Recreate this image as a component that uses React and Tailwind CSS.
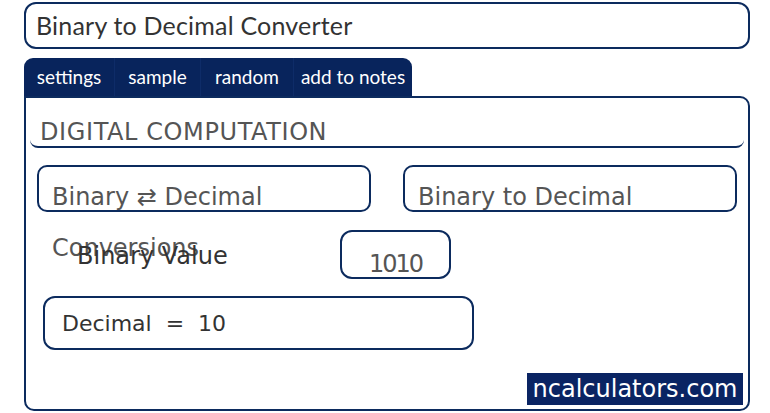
import React from "react"

const navy = "border-[#0c2b5e]"

export default function App() {
  return (
    <div className="w-[770px] h-[413px] bg-white px-[24px] pr-[20px] pt-[2px] font-['DejaVu_Sans',sans-serif] text-[#333]">
      {/* Title */}
      <div className={`h-[47px] border-2 ${navy} rounded-[12px] flex items-center pl-[10px] text-[25px] font-['Lato',sans-serif] tracking-[0.2px]`}>
        Binary to Decimal Converter
      </div>

      {/* Tabs */}
      <div className="mt-[9px] h-[38px] w-[388px] bg-[#08245c] rounded-t-[9px] flex items-stretch text-white text-[19px] font-['Lato',sans-serif]">
        <span className="w-[91px] flex items-center justify-center border-r border-[#0e2c68]">settings</span>
        <span className="w-[86px] flex items-center justify-center border-r border-[#0e2c68]">sample</span>
        <span className="w-[93px] flex items-center justify-center border-r border-[#0e2c68]">random</span>
        <span className="flex-1 flex items-center justify-center">add to notes</span>
      </div>

      {/* Panel */}
      <div className={`h-[315px] border-2 ${navy} rounded-tr-[10px] rounded-b-[10px] flex flex-col`}>
        <div className={`mx-[4px] h-[50px] border-b-2 ${navy} rounded-b-[8px] flex items-end pb-[2px] pl-[10px] text-[24px] leading-[24px] text-[#555] tracking-[0.6px]`}>
          DIGITAL COMPUTATION
        </div>

        <div className="mt-[17px] pl-[11px] flex gap-[32px] text-[24px]">
          <div className={`w-[334px] h-[47px] border-2 ${navy} rounded-[10px] pl-[13px] pt-[5px] text-[#555] leading-[51px] whitespace-nowrap`}>
            Binary ⇄ Decimal
            <br />
            Conversions
          </div>
          <div className={`w-[334px] h-[47px] border-2 ${navy} rounded-[10px] pl-[13px] pt-[5px] text-[#555] leading-[51px] whitespace-nowrap`}>
            Binary to Decimal
          </div>
        </div>

        <div className="mt-[18px] flex items-center text-[24px]">
          <div className="w-[314px] pl-[51px] pt-[2px] text-[#333]">Binary Value</div>
          <div className={`w-[111px] h-[49px] border-2 ${navy} rounded-[12px] flex justify-center items-start pt-[20px] leading-[24px] text-[24px] tracking-[-2px] text-[#555]`}>
            1010
          </div>
        </div>

        <div className="mt-[17px] ml-[17px] text-[22px]">
          <div className={`w-[431px] h-[54px] border-2 ${navy} rounded-[12px] flex items-center pl-[17px] text-[#333] whitespace-pre`}>
            {"Decimal  =  10"}
          </div>
        </div>

        <div className="mt-auto mb-[4px] flex justify-end pr-[5px]">
          <div className="w-[216px] h-[32px] bg-[#0a2463] text-white text-[24px] flex items-center justify-center">
            ncalculators.com
          </div>
        </div>
      </div>
    </div>
  )
}
